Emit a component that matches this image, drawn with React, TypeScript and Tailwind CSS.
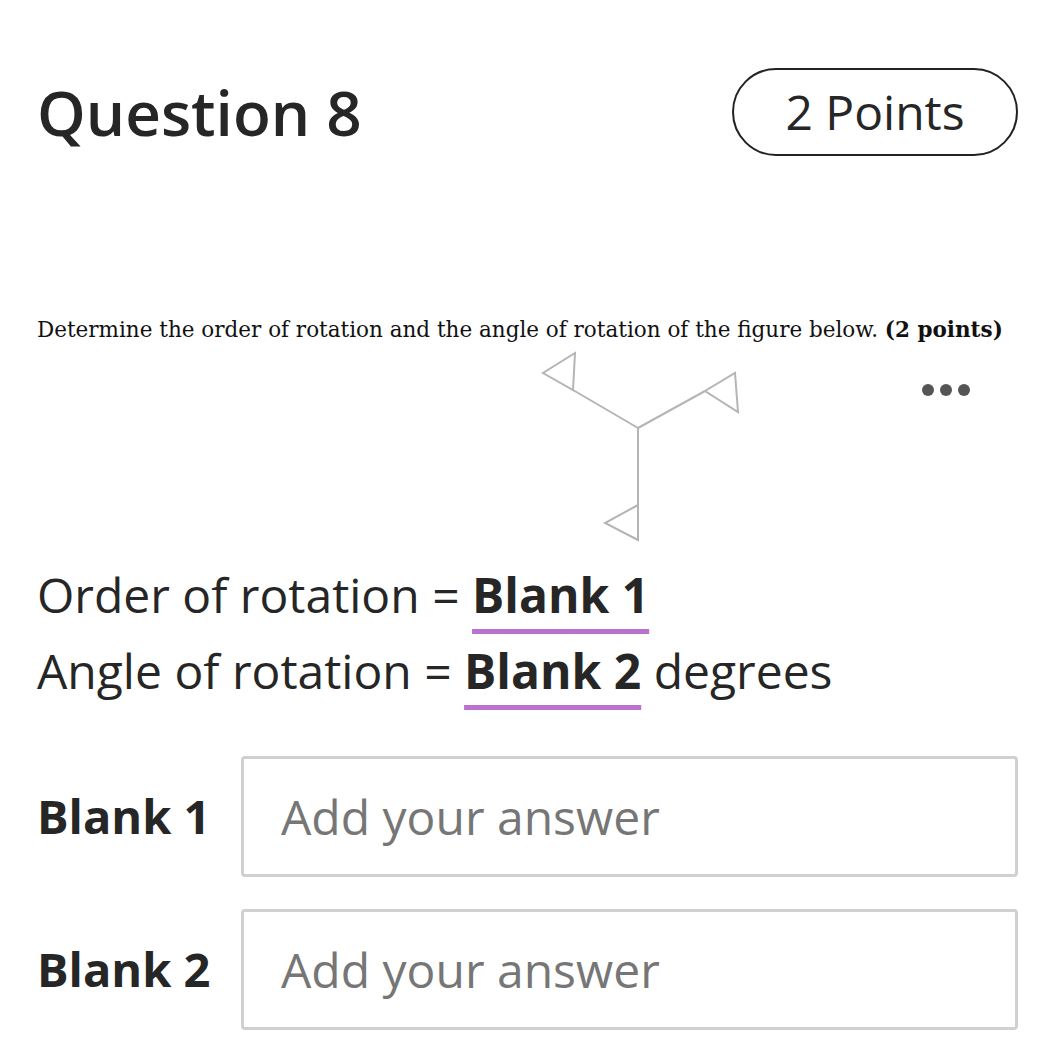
import React from "react";

function RotationFigure() {
  return (
    <svg width="200" height="196" viewBox="540 346 200 196" className="block" aria-hidden>
      <g fill="none" stroke="#b5b5b5" strokeWidth="2" strokeLinejoin="miter">
        <line x1="638" y1="427" x2="638" y2="539" />
        <line x1="638" y1="427" x2="573" y2="389" />
        <line x1="638" y1="427" x2="705" y2="390" />
        <polygon points="638,504 605,522 638,539" />
        <polygon points="575,352 543,372 573,389" />
        <polygon points="735,372 738,411 705,390" />
      </g>
    </svg>
  );
}

function BlankField({ label }: { label: string }) {
  return (
    <div className="flex items-center">
      <span className="w-[204px] shrink-0 text-[47px] font-bold text-[#262626]">{label}</span>
      <input
        type="text"
        placeholder="Add your answer"
        className="h-[121px] flex-1 rounded-[4px] border-[3px] border-[#d0d0d0] bg-white px-[37px] text-[48px] text-[#262626] placeholder:text-[#767676] focus:outline-none"
      />
    </div>
  );
}

export default function App() {
  return (
    <div className="min-h-screen bg-white pl-[37px] pr-[39px] pt-[68px] font-['Open_Sans',sans-serif] text-[#262626]">
      <div className="flex items-center justify-between">
        <h1 className="text-[62px] font-semibold leading-none">Question 8</h1>
        <div className="flex h-[88px] w-[286px] items-center justify-center rounded-full border-[2.5px] border-[#222]">
          <span className="text-[48px] font-medium leading-none">2 Points</span>
        </div>
      </div>

      <p className="mt-[161px] whitespace-nowrap font-['DejaVu_Serif',serif] text-[21.5px] leading-[26px] text-[#111]">
        Determine the order of rotation and the angle of rotation of the figure below. <b>(2 points)</b>
      </p>

      <div className="flex items-start">
        <div className="ml-[503px] mt-[4px]">
          <RotationFigure />
        </div>
        <div className="ml-auto mr-[48px] mt-[41px] flex gap-[6px]">
          <span className="h-[12px] w-[12px] rounded-full bg-[#555]" />
          <span className="h-[12px] w-[12px] rounded-full bg-[#555]" />
          <span className="h-[12px] w-[12px] rounded-full bg-[#555]" />
        </div>
      </div>

      <div className="mt-[14px] text-[48px] leading-[76px]">
        <p>
          Order of rotation ={" "}
          <span className="font-bold underline decoration-[#bb72cc] decoration-[5px] underline-offset-[16px]">Blank 1</span>
        </p>
        <p>
          Angle of rotation ={" "}
          <span className="font-bold underline decoration-[#bb72cc] decoration-[5px] underline-offset-[16px]">Blank 2</span>{" "}
          degrees
        </p>
      </div>

      <div className="mt-[47px] flex flex-col gap-[32px] pb-[28px]">
        <BlankField label="Blank 1" />
        <BlankField label="Blank 2" />
      </div>
    </div>
  );
}
